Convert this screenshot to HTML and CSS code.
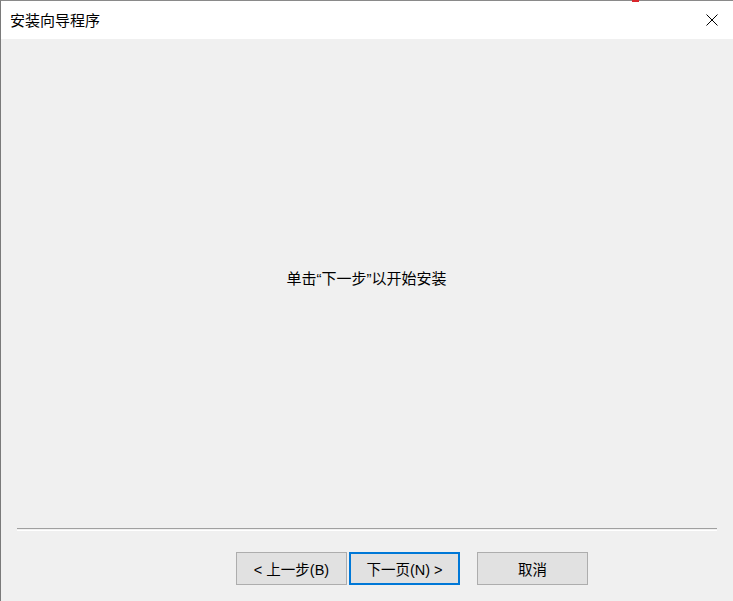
FILE: index.html
```html
<!DOCTYPE html>
<html lang="zh-CN">
<head>
<meta charset="utf-8">
<title>安装向导程序</title>
<link rel="stylesheet" href="styles.css">
</head>
<body>
<div class="window">
  <span class="mark"></span>
  <div class="titlebar">
    <span class="title">安装向导程序</span>
    <span class="close">
      <svg width="12" height="12" viewBox="0 0 12 12"><path d="M0.5 0.5 L11.5 11.5 M11.5 0.5 L0.5 11.5" stroke="#000" stroke-width="1" fill="none"/></svg>
    </span>
  </div>
  <div class="content">
    <div class="main">
      <span class="message">单击<span class="q">“</span>下一步<span class="q">”</span>以开始安装</span>
    </div>
    <div class="separator"></div>
    <div class="buttons">
      <button class="btn">&lt; 上一步(B)</button>
      <button class="btn btn-default">下一页(N) &gt;</button>
      <button class="btn btn-cancel">取消</button>
    </div>
  </div>
</div>
</body>
</html>
```
FILE: styles.css
```css
html, body {
  margin: 0;
  padding: 0;
  height: 100%;
  overflow: hidden;
}
body {
  font-family: "Liberation Sans", "Noto Sans CJK SC", sans-serif;
  color: #000;
  background: #f0f0f0;
}
.window {
  position: relative;
  height: 601px;
  box-sizing: border-box;
  border-top: 1px solid #8a8a8a;
  border-left: 1px solid #7a7a7a;
  display: flex;
  flex-direction: column;
}
.mark {
  position: absolute;
  top: -1px;
  left: 631px;
  width: 7px;
  height: 2px;
  background: #d9262c;
}
.titlebar {
  height: 38px;
  background: #fff;
  display: flex;
  align-items: center;
  justify-content: space-between;
  padding-left: 9px;
  padding-right: 15px;
}
.title {
  font-size: 15px;
  font-family: "Noto Sans CJK SC", sans-serif;
  line-height: 20px;
}
.close {
  display: flex;
  width: 12px;
  height: 12px;
}
.content {
  flex: 1;
  background: #f0f0f0;
  display: flex;
  flex-direction: column;
}
.main {
  flex: 1;
  display: flex;
  align-items: center;
  justify-content: center;
  padding-bottom: 10px;
}
.message {
  font-size: 15px;
  font-family: "Noto Sans CJK SC", sans-serif;
  line-height: 20px;
  margin-left: -1px;
}
.q {
  font-family: "Liberation Sans", sans-serif;
  font-size: 15px;
}
.separator {
  height: 1px;
  margin: 0 16px 0 16px;
  border-top: 1px solid #a0a0a0;
  border-bottom: 1px solid #ffffff;
}
.buttons {
  display: flex;
  padding-left: 235px;
  margin-top: 21px;
  margin-bottom: 16px;
}
.btn {
  width: 111px;
  height: 33px;
  box-sizing: border-box;
  background: #e1e1e1;
  border: 1px solid #adadad;
  font-family: "Liberation Sans", "Noto Sans CJK SC", sans-serif;
  font-size: 14.5px;
  color: #000;
  padding: 0;
  margin: 0 2px 0 0;
  display: flex;
  align-items: center;
  justify-content: center;
}
.btn-default {
  border: 2px solid #0078d7;
  margin-right: 17px;
}
.btn-cancel {
  margin-right: 0;
}
```
